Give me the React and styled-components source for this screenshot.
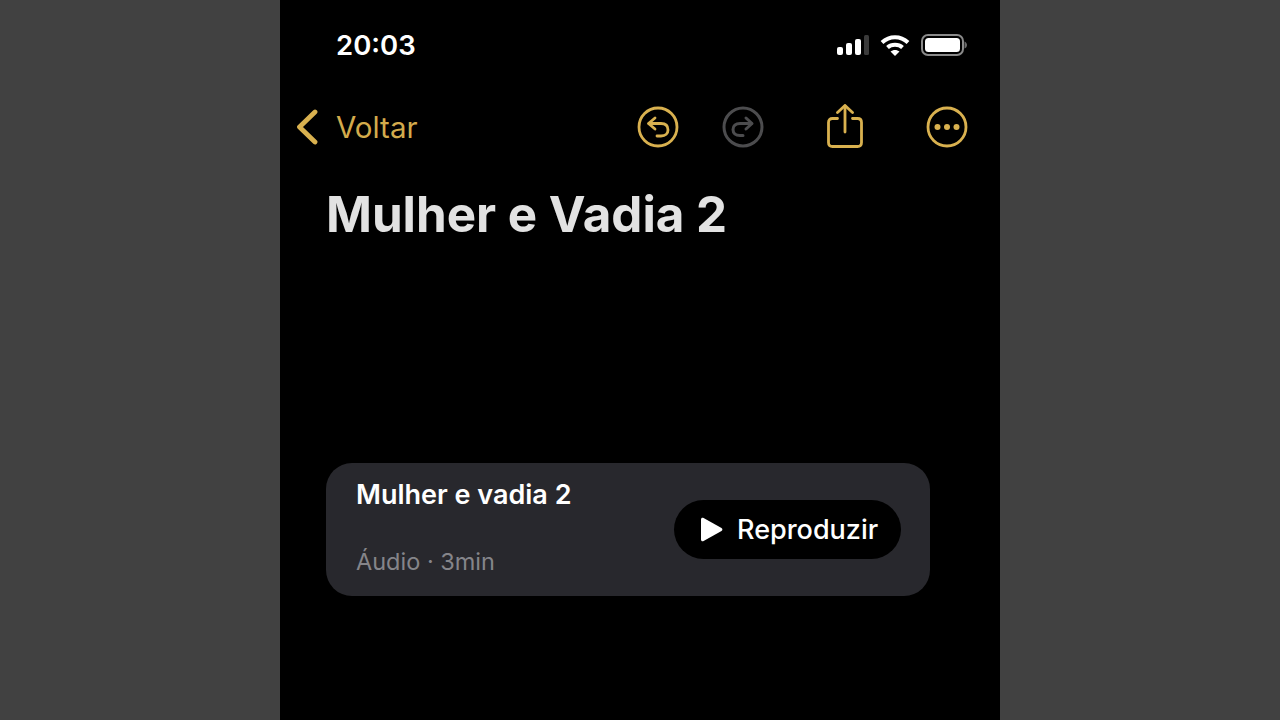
import React from 'react';
import styled, { createGlobalStyle } from 'styled-components';

const GlobalStyle = createGlobalStyle`
  html, body {
    margin: 0;
    padding: 0;
    background: #414141;
  }
`;

const Page = styled.div`
  width: 1280px;
  height: 720px;
  display: flex;
  justify-content: center;
  background: #414141;
  overflow: hidden;
`;

const Phone = styled.div`
  width: 720px;
  height: 720px;
  background: #000;
  display: flex;
  flex-direction: column;
  font-family: Inter, "Liberation Sans", sans-serif;
`;

const StatusBar = styled.div`
  height: 90px;
  box-sizing: border-box;
  padding: 26px 33px 0 56px;
  display: flex;
  justify-content: space-between;
  align-items: flex-start;
`;

const Clock = styled.div`
  color: #fff;
  font-size: 27.5px;
  line-height: 38px;
  font-weight: 600;
`;

const StatusIcons = styled.div`
  display: flex;
  align-items: center;
  gap: 11px;
  height: 38px;
`;

const Toolbar = styled.div`
  height: 74px;
  box-sizing: border-box;
  padding: 0 32px 0 16px;
  display: flex;
  align-items: center;
  justify-content: space-between;
`;

const BackLink = styled.div`
  display: flex;
  align-items: center;
  gap: 18px;
  color: #d3ab4c;
  font-size: 29.5px;
  line-height: 36px;
  font-weight: 400;
`;

const ToolIcons = styled.div`
  display: flex;
  align-items: center;
`;

const ToolSlot = styled.div`
  display: flex;
  margin-left: ${(p) => p.$gap || 0}px;
`;

const Title = styled.h1`
  margin: 22px 0 0 46px;
  color: #e2e2e2;
  font-size: 49.3px;
  line-height: 56px;
  font-weight: 700;
`;

const AudioCard = styled.div`
  margin: 221px 0 0 46px;
  width: 604px;
  height: 133px;
  box-sizing: border-box;
  padding: 0 29px 0 30px;
  background: #28282d;
  border-radius: 26px;
  display: flex;
  justify-content: space-between;
  align-items: center;
`;

const CardText = styled.div`
  height: 133px;
  box-sizing: border-box;
  padding-top: 15px;
  display: flex;
  flex-direction: column;
  justify-content: flex-start;
`;

const CardTitle = styled.div`
  color: #fff;
  font-size: 27px;
  line-height: 34px;
  font-weight: 600;
`;

const CardMeta = styled.div`
  margin-top: 33px;
  color: #85858a;
  font-size: 23.5px;
  line-height: 34px;
`;

const PlayButton = styled.div`
  width: 227px;
  height: 59px;
  box-sizing: border-box;
  padding-left: 26px;
  border-radius: 30px;
  background: #000;
  color: #fff;
  display: flex;
  align-items: center;
  gap: 14px;
  font-size: 27px;
  font-weight: 500;
`;

const gold = '#d9b14f';

const SignalBars = () => (
  <svg width="32" height="20" viewBox="0 0 32 20">
    <rect x="0" y="12" width="6" height="8" rx="2" fill="#fff" />
    <rect x="9" y="8" width="6" height="12" rx="2" fill="#fff" />
    <rect x="18" y="4" width="6" height="16" rx="2" fill="#fff" />
    <rect x="27" y="0" width="5" height="20" rx="1.5" fill="#3a3a3a" />
  </svg>
);

const Wifi = () => (
  <svg width="30" height="22" viewBox="0 0 30 22" fill="none">
    <path d="M2 8.5C9.5 1.5 20.5 1.5 28 8.5" stroke="#fff" strokeWidth="4" />
    <path d="M7.5 13.5C11.5 9.8 18.5 9.8 22.5 13.5" stroke="#fff" strokeWidth="4" />
    <path d="M15 22L10.5 17.5C13 15.4 17 15.4 19.5 17.5Z" fill="#fff" />
  </svg>
);

const Battery = () => (
  <svg width="46" height="22" viewBox="0 0 46 22" fill="none">
    <rect x="1" y="1" width="41" height="20" rx="6" stroke="#8a8a8a" strokeWidth="2" />
    <rect x="4" y="4" width="35" height="14" rx="3.5" fill="#fff" />
    <path d="M43.5 7.5C45 8 46 9.5 46 11C46 12.5 45 14 43.5 14.5Z" fill="#6a6a6a" />
  </svg>
);

const Chevron = () => (
  <svg width="22" height="36" viewBox="0 0 22 36" fill="none">
    <path d="M19 3L3.5 18L19 33" stroke={gold} strokeWidth="4.8" strokeLinecap="round" strokeLinejoin="round" />
  </svg>
);

const UndoIcon = () => (
  <svg width="42" height="42" viewBox="0 0 42 42" fill="none" stroke={gold} strokeWidth="2.8" strokeLinecap="round" strokeLinejoin="round">
    <circle cx="21" cy="21" r="19" />
    <path d="M18 12L11.5 17.5L18 23" />
    <path d="M12 17.5H24C28.5 17.5 31 20 31 24C31 27.5 28.5 30 24 30H20" />
  </svg>
);

const RedoIcon = () => (
  <svg width="42" height="42" viewBox="0 0 42 42" fill="none" stroke="#4c4c4e" strokeWidth="3" strokeLinecap="round" strokeLinejoin="round">
    <circle cx="21" cy="21" r="19" />
    <path d="M24 12L30 17.5L24 23" />
    <path d="M29.5 17.5H18C13.5 17.5 11 20 11 23.5C11 27 13.5 29.5 18 29.5H21" />
  </svg>
);

const ShareIcon = () => (
  <svg width="38" height="46" viewBox="0 0 38 46" fill="none" stroke={gold} strokeWidth="2.8" strokeLinecap="round" strokeLinejoin="round">
    <path d="M11.5 14.5H6.5C4 14.5 2.5 16 2.5 18.5V38.5C2.5 41 4 42.5 6.5 42.5H31.5C34 42.5 35.5 41 35.5 38.5V18.5C35.5 16 34 14.5 31.5 14.5H26.5" />
    <path d="M19 28V2" />
    <path d="M11.5 8.5L19 1.5L26.5 8.5" />
  </svg>
);

const MoreIcon = () => (
  <svg width="42" height="42" viewBox="0 0 42 42" fill="none">
    <circle cx="21" cy="21" r="19" stroke={gold} strokeWidth="2.8" />
    <circle cx="11.5" cy="21" r="3" fill={gold} />
    <circle cx="21" cy="21" r="3" fill={gold} />
    <circle cx="30.5" cy="21" r="3" fill={gold} />
  </svg>
);

const PlayGlyph = () => (
  <svg width="23" height="25" viewBox="0 0 23 25">
    <path d="M1 2.5C1 1 2.3 0.3 3.6 1L21.5 11C22.7 11.8 22.7 13.2 21.5 14L3.6 24C2.3 24.7 1 24 1 22.5Z" fill="#fff" />
  </svg>
);

export default function App() {
  return (
    <Page>
      <GlobalStyle />
      <Phone>
        <StatusBar>
          <Clock>20:03</Clock>
          <StatusIcons>
            <SignalBars />
            <Wifi />
            <Battery />
          </StatusIcons>
        </StatusBar>
        <Toolbar>
          <BackLink>
            <Chevron />
            Voltar
          </BackLink>
          <ToolIcons>
            <ToolSlot><UndoIcon /></ToolSlot>
            <ToolSlot $gap={43}><RedoIcon /></ToolSlot>
            <ToolSlot $gap={62}><ShareIcon /></ToolSlot>
            <ToolSlot $gap={62}><MoreIcon /></ToolSlot>
          </ToolIcons>
        </Toolbar>
        <Title>Mulher e Vadia 2</Title>
        <AudioCard>
          <CardText>
            <CardTitle>Mulher e vadia 2</CardTitle>
            <CardMeta>Áudio · 3min</CardMeta>
          </CardText>
          <PlayButton>
            <PlayGlyph />
            Reproduzir
          </PlayButton>
        </AudioCard>
      </Phone>
    </Page>
  );
}
